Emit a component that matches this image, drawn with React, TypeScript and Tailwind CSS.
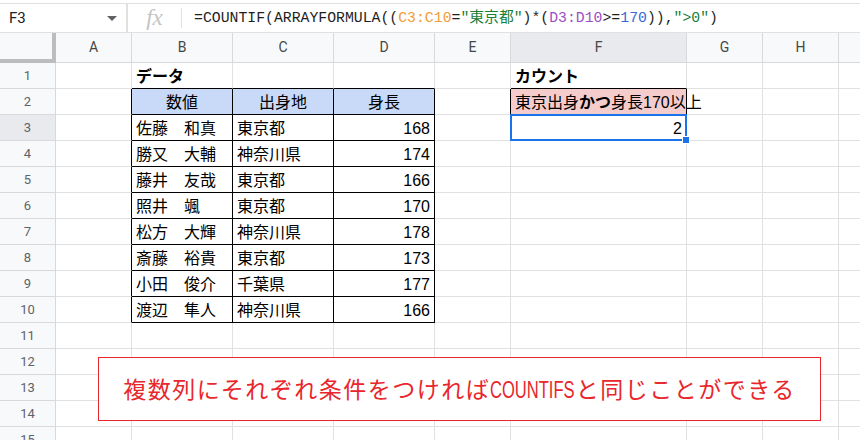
import React from 'react';

type CellDef = {
  t?: React.ReactNode;
  a?: 'l' | 'c' | 'r';
  b?: boolean;
  bg?: string;
  rb?: boolean;
  bb?: boolean;
};

const COLS = ['A', 'B', 'C', 'D', 'E', 'F', 'G', 'H'];
const WIDTHS = ['w-[76px]', 'w-[101px]', 'w-[101px]', 'w-[101px]', 'w-[76px]', 'w-[176px]', 'w-[76px]', 'w-[76px]'];

const people: [string, string, string][] = [
  ['佐藤\u3000和真', '東京都', '168'],
  ['勝又\u3000大輔', '神奈川県', '174'],
  ['藤井\u3000友哉', '東京都', '166'],
  ['照井\u3000颯', '東京都', '170'],
  ['松方\u3000大輝', '神奈川県', '178'],
  ['斎藤\u3000裕貴', '東京都', '173'],
  ['小田\u3000俊介', '千葉県', '177'],
  ['渡辺\u3000隼人', '神奈川県', '166'],
];

function buildCells() {
  const m: Record<string, CellDef> = {};
  m['1,1'] = { t: 'データ', b: true, bb: true };
  m['1,2'] = { bb: true };
  m['1,3'] = { bb: true };
  m['1,5'] = { t: 'カウント', b: true, bb: true };
  for (let r = 2; r <= 10; r++) m[`${r},0`] = { rb: true };
  const hdrBg = 'bg-[#c9daf8]';
  m['2,1'] = { t: '数値', a: 'c', bg: hdrBg, rb: true, bb: true };
  m['2,2'] = { t: '出身地', a: 'c', bg: hdrBg, rb: true, bb: true };
  m['2,3'] = { t: '身長', a: 'c', bg: hdrBg, rb: true, bb: true };
  m['2,4'] = { rb: true };
  m['2,5'] = {
    t: (
      <>
        東京出身<b className="font-bold">かつ</b>身長170以上
      </>
    ),
    bg: 'bg-[#f4cccc]',
    rb: true,
    bb: true,
  };
  m['3,4'] = { rb: true };
  m['3,5'] = { t: '2', a: 'r', rb: true };
  people.forEach(([name, pref, h], i) => {
    const r = i + 3;
    m[`${r},1`] = { t: name, rb: true, bb: true };
    m[`${r},2`] = { t: pref, rb: true, bb: true };
    m[`${r},3`] = { t: h, a: 'r', rb: true, bb: true };
  });
  return m;
}

const cells = buildCells();

function Cell({ c, w, sel }: { c?: CellDef; w: string; sel?: boolean }) {
  const align = c?.a === 'c' ? 'justify-center' : c?.a === 'r' ? 'justify-end' : 'justify-start';
  return (
    <div
      className={`${w} relative shrink-0 h-full flex items-center px-[4px] whitespace-nowrap border-r border-b ${
        c?.rb ? 'border-r-black' : 'border-r-[#e1e1e1]'
      } ${c?.bb ? 'border-b-black' : 'border-b-[#e1e1e1]'} ${c?.bg ?? ''} ${align} ${c?.b ? 'font-bold' : ''}`}
    >
      <span className="pt-[2px]">{c?.t}</span>
      {sel && (
        <div className="absolute z-10 -left-[1px] -top-[1px] -right-[1px] -bottom-[1px] border-2 border-[#1a73e8]">
          <div className="absolute -right-[5px] -bottom-[5px] w-[8px] h-[8px] bg-[#1a73e8] border border-white" />
        </div>
      )}
    </div>
  );
}

function Formula() {
  return (
    <div className="text-[14.8px] text-[#1f1f1f] whitespace-nowrap font-['Liberation_Mono','Noto_Sans_CJK_JP',monospace]">
      =COUNTIF(ARRAYFORMULA((<span className="text-[#f29d38]">C3:C10</span>=
      <span className="text-[#188038]">"東京都"</span>)*(<span className="text-[#9c4fc4]">D3:D10</span>&gt;=
      <span className="text-[#3867d6]">170</span>)),<span className="text-[#188038]">"&gt;0"</span>)
    </div>
  );
}

export default function App() {
  const rows = Array.from({ length: 15 }, (_, i) => i + 1);
  return (
    <div className="relative w-[860px] h-[440px] overflow-hidden bg-white font-['Liberation_Sans','Noto_Sans_CJK_JP',sans-serif] text-[16px] text-black">
      {/* formula bar */}
      <div className="h-[33px] pt-[3px] border-b border-[#e1e1e1]">
        <div className="h-full border-t border-[#e1e1e1] flex items-center">
          <div className="w-[128px] h-full flex items-center justify-between pl-[9px] pr-[9px] border-r-2 border-[#e1e1e1] my-[3px]">
            <span className="font-['Roboto',sans-serif] text-[15px] text-[#202124]">F3</span>
            <svg width="10" height="6" viewBox="0 0 10 6" className="mt-[1px]">
              <path d="M0 0 L10 0 L5 5 Z" fill="#5f6368" />
            </svg>
          </div>
          <div className="w-[54px] h-[20px] flex items-center justify-center border-r border-[#e1e1e1]">
            <span className="font-['Liberation_Serif',serif] italic text-[23px] text-[#c4c4c4] leading-none -mt-[2px]">
              fx
            </span>
          </div>
          <div className="pl-[12px]">
            <Formula />
          </div>
        </div>
      </div>

      {/* column headers */}
      <div className="flex h-[30px] bg-[#f8f9fa] font-['Roboto',sans-serif] text-[14px] text-[#444746]">
        <div className="w-[56px] shrink-0 h-full border-r-[4px] border-b-[4px] border-[#bdbdbd]" />
        {COLS.map((c, i) => (
          <div
            key={c}
            className={`${WIDTHS[i]} shrink-0 h-full flex items-center justify-center border-r border-b border-[#d9d9d9] ${
              c === 'F' ? 'bg-[#e8eaed]' : ''
            }`}
          >
            {c}
          </div>
        ))}
        <div className="flex-1 h-full border-b border-[#d9d9d9]" />
      </div>

      {/* rows */}
      {rows.map((r) => (
        <div key={r} className="flex h-[26px]">
          <div
            className={`w-[56px] shrink-0 h-full flex items-center justify-center border-r border-b border-[#d9d9d9] font-['Roboto',sans-serif] text-[13px] text-[#5f6368] ${
              r === 3 ? 'bg-[#e8eaed]' : 'bg-[#f8f9fa]'
            }`}
          >
            {r}
          </div>
          {COLS.map((_, ci) => (
            <Cell key={ci} c={cells[`${r},${ci}`]} w={WIDTHS[ci]} sel={r === 3 && ci === 5} />
          ))}
          <div className="flex-1 h-full border-b border-[#e1e1e1]" />
        </div>
      ))}

      {/* note drawing */}
      <div className="absolute z-20 left-[98px] top-[357px] w-[723px] h-[64px] bg-white border border-[#e8262b] flex items-center justify-center">
        <span className="font-['Noto_Sans_CJK_JP',sans-serif] text-[23px] tracking-[1.5px] text-[#e8262b] whitespace-nowrap">
          複数列にそれぞれ条件をつければ
          <span className="inline-block scale-x-[0.72] origin-left -mr-[32px] font-['Liberation_Sans',sans-serif] tracking-normal">
            COUNTIFS
          </span>
          と同じことができる
        </span>
      </div>
    </div>
  );
}
